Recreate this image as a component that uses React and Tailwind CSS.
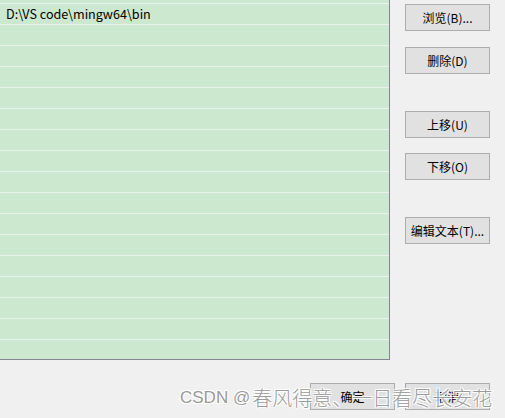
const rows = Array.from({ length: 17 });

function Btn({ children, className = '' }) {
  return (
    <button className={`w-[85px] h-[27px] border border-[#adadad] bg-[#e1e1e1] text-[12px] text-black flex items-center justify-center ${className}`}>
      {children}
    </button>
  );
}

export default function App() {
  return (
    <div
      className="relative w-[505px] h-[418px] bg-[#f0f0f0] overflow-hidden"
      style={{ fontFamily: '"Noto Sans CJK SC", "Noto Sans", sans-serif' }}
    >
      <div className="flex">
        {/* list */}
        <div className="w-[390px] h-[360px] bg-[#cce8cf] border-r border-b border-[#828790] overflow-hidden">
          <div className="h-[3px]" />
          {rows.map((_, i) => (
            <div key={i} className="h-[21px] border-t border-[#e9f2ea] pl-[6px] text-[12.6px] leading-[20px] text-black">
              {i === 0 ? 'D:\\VS code\\mingw64\\bin' : ''}
            </div>
          ))}
        </div>

        {/* side buttons */}
        <div className="flex flex-col pl-[15px] pt-[4px]">
          <Btn>浏览(B)...</Btn>
          <Btn className="mt-[16px]">删除(D)</Btn>
          <Btn className="mt-[37px]">上移(U)</Btn>
          <Btn className="mt-[15px]">下移(O)</Btn>
          <Btn className="mt-[37px]">编辑文本(T)...</Btn>
        </div>
      </div>

      <div className="flex justify-end gap-[10px] pr-[15px] mt-[23px]">
        <Btn>确定</Btn>
        <Btn>取消</Btn>
      </div>

      {/* watermark */}
      <div
        className="absolute left-[180px] top-[384px] flex items-center whitespace-nowrap text-[#9a9a9a] leading-[28px]"
        style={{ textShadow: '1px 1px 0 #fff, -1px -1px 0 #fff, 1px -1px 0 #fff, -1px 1px 0 #fff' }}
      >
        <span className="text-[17px] pr-[2px]" style={{ fontFamily: '"Liberation Sans", Arial, sans-serif' }}>CSDN @</span>
        <span className="text-[20px] font-light">春风得意、一日看尽长安花</span>
      </div>
    </div>
  );
}
